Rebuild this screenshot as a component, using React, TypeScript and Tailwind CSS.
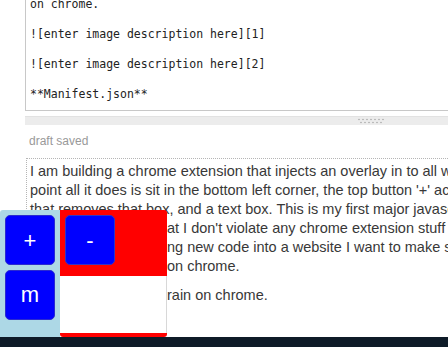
import React from "react";

const codeLines = [
  "on chrome.",
  "",
  "![enter image description here][1]",
  "",
  "![enter image description here][2]",
  "",
  "**Manifest.json**",
  "",
];

const GripDots = () => (
  <svg width="28" height="6" viewBox="0 0 28 6">
    {[0, 1, 2, 3, 4, 5, 6].map((i) => (
      <circle key={"a" + i} cx={1 + i * 4} cy={1.5} r={0.7} fill="#9a9a9a" />
    ))}
    {[0, 1, 2, 3, 4, 5].map((i) => (
      <circle key={"b" + i} cx={3 + i * 4} cy={4.5} r={0.7} fill="#9a9a9a" />
    ))}
  </svg>
);

// part of a line that sits under the overlay
const Hidden = ({ children }: { children: React.ReactNode }) => (
  <span className="inline-block w-[137px] h-[19px] overflow-hidden align-top">
    {children}
  </span>
);

const App = () => {
  return (
    <div className="w-[448px] h-[347px] overflow-hidden bg-white relative">
      <div className="h-[337px] overflow-hidden pl-[25px] flex flex-col">
        {/* markdown source textarea, scrolled to bottom */}
        <div className="h-[111px] shrink-0 border-l border-b border-[#c8c8c8] bg-white overflow-hidden">
          <div className="-mt-[3px] pl-[4px] text-[11.5px] leading-[15px] text-[#222] font-['DejaVu_Sans_Mono',monospace] whitespace-pre">
            {codeLines.map((line, i) => (
              <div key={i} className="h-[15px]">
                {line}
              </div>
            ))}
          </div>
        </div>

        {/* resize grip */}
        <div className="mt-[5px] h-[9px] shrink-0 bg-[#ececec] border-t border-[#e2e2e2] flex items-center">
          <div className="ml-[333px]">
            <GripDots />
          </div>
        </div>

        <div className="h-[33px] shrink-0 pl-[4px] pt-[8px] text-[12px] leading-[16px] text-[#999] font-['Liberation_Sans',Arial,sans-serif]">
          draft saved
        </div>

        {/* preview */}
        <div className="ml-[1px] flex-1 border-l border-t border-dotted border-[#b5b5b5] pl-[3px] pt-[3px] text-[14.5px] leading-[19px] text-[#383838] font-['Liberation_Sans',Arial,sans-serif] whitespace-nowrap">
          <div className="mb-[9.5px]">
            <div>I am building a chrome extension that injects an overlay in to all websites I visit. At this</div>
            <div>point all it does is sit in the bottom left corner, the top button '+' activates a box, '-'</div>
            <div>that removes that box, and a text box. This is my first major javascript project, and</div>
            <div>
              <Hidden>I want to make sure th</Hidden>at I don't violate any chrome extension stuff and since
            </div>
            <div>
              <Hidden>since I am injecti</Hidden>ng new code into a website I want to make sure it is not a
            </div>
            <div>
              <Hidden>big performance hit </Hidden>on chrome.
            </div>
          </div>
          <div>
            <Hidden>It should not be a d</Hidden>rain on chrome.
          </div>
        </div>
      </div>

      {/* bottom dark strip */}
      <div className="h-[10px] bg-[#0e1b28]" />

      {/* injected overlay, fixed bottom-left */}
      <div className="absolute left-0 top-[210px] flex h-[127px]">
        <div className="w-[60px] bg-[#add8e6] rounded-tl-[3px] p-[5px] flex flex-col gap-[5px]">
          <button className="w-[50px] h-[50px] rounded-[5px] bg-[#0000ff] border border-[#2a2ad0] text-white text-[22px] font-['Liberation_Sans',Arial,sans-serif] flex items-center justify-center">
            +
          </button>
          <button className="w-[50px] h-[50px] rounded-[5px] bg-[#0000ff] border border-[#2a2ad0] text-white text-[22px] font-['Liberation_Sans',Arial,sans-serif] flex items-center justify-center pb-[2px]">
            m
          </button>
        </div>
        <div className="w-[107px] bg-[#ff0000] rounded-tr-[3px] rounded-b-[3px] flex flex-col">
          <div className="p-[5px] h-[66px]">
            <button className="w-[50px] h-[50px] rounded-[5px] bg-[#0000ff] border border-[#3535c0] text-white text-[22px] font-['Liberation_Sans',Arial,sans-serif] flex items-center justify-center">
              -
            </button>
          </div>
          <div className="h-[57px] bg-white border-r border-[#d8d8d8]" />
        </div>
      </div>
    </div>
  );
};

export default App;
